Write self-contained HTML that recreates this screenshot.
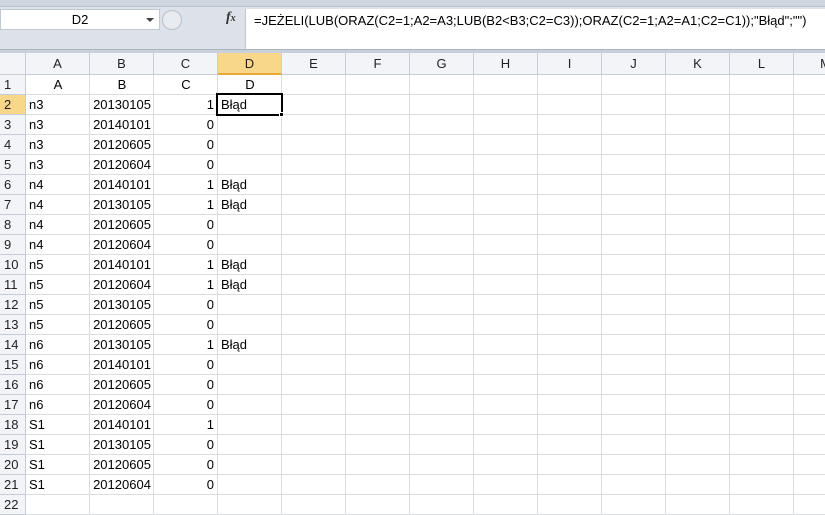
<!DOCTYPE html><html><head><meta charset="utf-8"><style>
*{margin:0;padding:0;box-sizing:border-box}
body{width:825px;height:512px;overflow:hidden;background:#fff;font-family:"Liberation Sans",sans-serif;font-size:13px;position:relative}
.a{position:absolute}
.hd{position:absolute;background:#f2f4f7;color:#222;text-align:center;line-height:20px;border-right:1px solid #c6cdd6;border-bottom:1px solid #c6cdd6}
.c{position:absolute;height:20px;line-height:20px;padding:0 3px;white-space:nowrap}
</style></head><body>
<div class="a" style="left:0;top:0;width:825px;height:53px;background:#dde2e9"></div>
<div class="a" style="left:0;top:0;width:825px;height:7px;background:#cfd6df;border-bottom:1px solid #b8c1cc"></div>
<div class="a" style="left:0;top:9px;width:160px;height:21px;background:#fff;border:1px solid #c0c8d2;text-align:center;line-height:20px;font-size:13px">D2</div>
<div class="a" style="left:146px;top:18px;width:0;height:0;border-left:4px solid transparent;border-right:4px solid transparent;border-top:4px solid #444"></div>
<div class="a" style="left:162px;top:10px;width:20px;height:20px;border-radius:10px;border:1px solid #b8c0ca;background:#e8ebef"></div>
<div class="a" style="left:226px;top:10px;font-family:'Liberation Serif',serif;font-style:italic;font-weight:bold;font-size:14px;color:#333">f<span style="font-size:10px">x</span></div>
<div class="a" style="left:245px;top:9px;width:580px;height:40px;background:#fff;border-left:1px solid #c0c8d2;padding:4px 0 0 8px;font-size:13px">=JEŻELI(LUB(ORAZ(C2=1;A2=A3;LUB(B2&lt;B3;C2=C3));ORAZ(C2=1;A2=A1;C2=C1));"Błąd";"")</div>
<div class="a" style="left:0;top:49px;width:825px;height:4px;background:#c9d0d9;border-top:1px solid #aab4c0"></div>
<div id="g"></div>
<script>
var cols=["A","B","C","D","E","F","G","H","I","J","K","L","M"],x0=26,w=64,h="";
h+='<div class="hd" style="left:0;top:53px;width:26px;height:22px"></div>';
for(var i=0;i<cols.length;i++){var x=x0+i*w;
h+='<div class="hd" style="left:'+x+'px;top:53px;width:'+w+'px;height:22px;line-height:22px;'+(i==3?'background:#f8d68a;border-bottom:2px solid #e8a93a':'')+'">'+cols[i]+'</div>';
h+='<div class="a" style="left:'+(x+w-1)+'px;top:75px;width:1px;height:440px;background:#dadcdd"></div>';}
for(var r=1;r<=22;r++){var y=75+(r-1)*20;
h+='<div class="hd" style="left:0;top:'+y+'px;width:26px;height:20px;text-align:left;padding-left:4px;'+(r==2?'background:#f8d68a':'')+'">'+r+'</div>';
h+='<div class="a" style="left:26px;top:'+(y+19)+'px;width:799px;height:1px;background:#dadcdd"></div>';}
var d=[["n3","20130105",1,1],["n3","20140101",0],["n3","20120605",0],["n3","20120604",0],["n4","20140101",1,1],["n4","20130105",1,1],["n4","20120605",0],["n4","20120604",0],["n5","20140101",1,1],["n5","20120604",1,1],["n5","20130105",0],["n5","20120605",0],["n6","20130105",1,1],["n6","20140101",0],["n6","20120605",0],["n6","20120604",0],["S1","20140101",1],["S1","20130105",0],["S1","20120605",0],["S1","20120604",0]];
h+='<div class="c" style="left:26px;top:75px;width:64px;text-align:center">A</div><div class="c" style="left:90px;top:75px;width:64px;text-align:center">B</div><div class="c" style="left:154px;top:75px;width:64px;text-align:center">C</div><div class="c" style="left:218px;top:75px;width:64px;text-align:center">D</div>';
for(var k=0;k<d.length;k++){var y=95+k*20;
h+='<div class="c" style="left:26px;top:'+y+'px">'+d[k][0]+'</div>';
h+='<div class="c" style="left:90px;top:'+y+'px;width:64px;text-align:center">'+d[k][1]+'</div>';
h+='<div class="c" style="left:154px;top:'+y+'px;width:63px;text-align:right">'+d[k][2]+'</div>';
if(d[k][3])h+='<div class="c" style="left:218px;top:'+y+'px">Błąd</div>';}
h+='<div class="a" style="left:216px;top:93px;width:67px;height:23px;border:2px solid #000"></div><div class="a" style="left:279px;top:112px;width:5px;height:5px;background:#000;border:1px solid #fff"></div>';
document.getElementById("g").innerHTML=h;
</script>
</body></html>
